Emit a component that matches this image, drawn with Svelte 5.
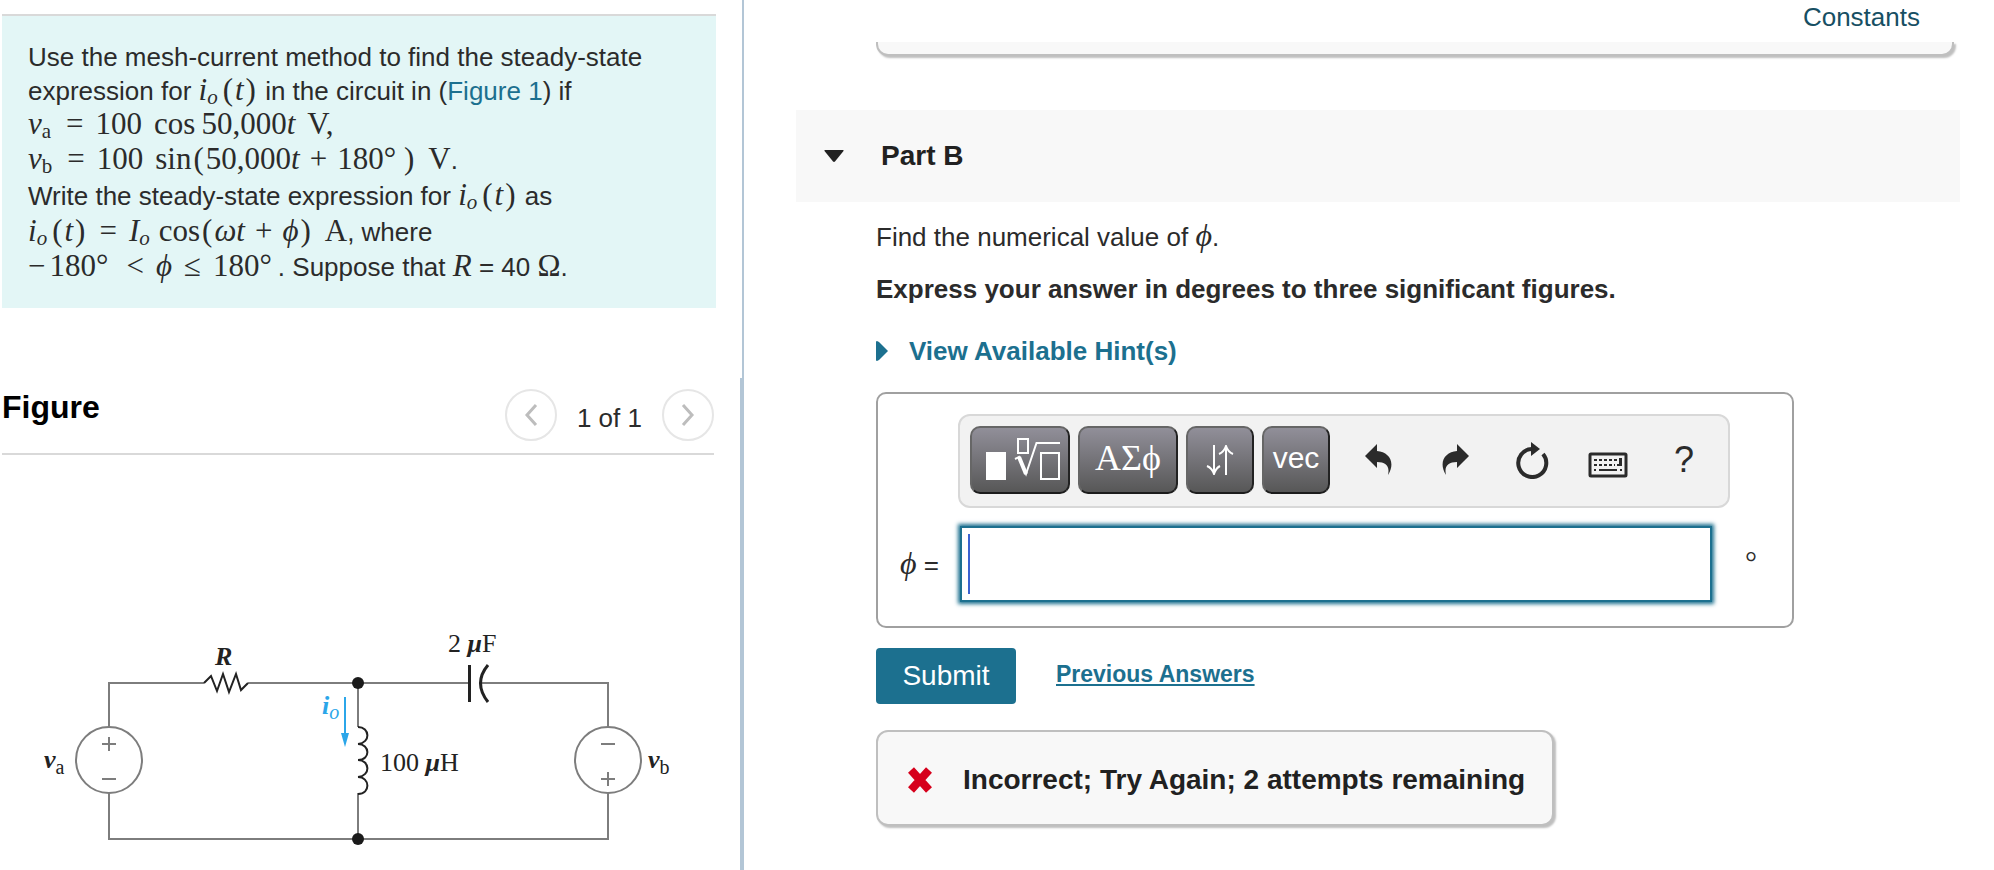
<script>
    let answer = '';
    let figure = 1;
    let total = 1;
    let open = true;
</script>

<main class="page">
    <div class="left">
        <section class="problem">
            <div class="prompt">
                <p>Use the mesh-current method to find the steady-state</p>
                <p>
                    expression for <span class="math"><i>i</i><sub><i>o</i></sub><span class="paren">(</span><i>t</i><span class="paren">)</span></span> in the circuit in (<a href="#figure">Figure 1</a>) if
                </p>
                <p>
                    <span class="math"><i>v</i><sub>a</sub><span class="rel">=</span>100<span class="op">cos</span>50,000<i>t</i><span class="unit">V</span>,</span>
                </p>
                <p class="tall">
                    <span class="math"><i>v</i><sub>b</sub><span class="rel">=</span>100<span class="fn">sin</span><span class="paren">(</span>50,000<i>t</i><span class="bin">+</span>180<span class="deg">°</span><span class="paren">)</span><span class="unit">V</span></span>.
                </p>
                <p class="tall">
                    Write the steady-state expression for <span class="math"><i>i</i><sub><i>o</i></sub><span class="paren">(</span><i>t</i><span class="paren">)</span></span> as
                </p>
                <p class="tall">
                    <span class="math"><i>i</i><sub><i>o</i></sub><span class="paren">(</span><i>t</i><span class="paren">)</span><span class="rel">=</span><i>I</i><sub><i>o</i></sub><span class="thin">cos</span><span class="paren">(</span><i>ωt</i><span class="bin">+</span><i>ϕ</i><span class="paren">)</span><span class="unit">A</span></span>, where
                </p>
                <p>
                    <span class="math"><span class="neg">−</span>180<span class="deg">°</span><span class="rel">&lt;</span><i>ϕ</i><span class="rel">≤</span>180<span class="deg">°</span></span>. Suppose that <span class="math"><i>R</i></span> = 40 <span class="math">Ω</span>.
                </p>
            </div>
        </section>

        <section class="figure" id="figure">
            <header>
                <h2>Figure</h2>
                <nav>
                    <button class="round" aria-label="Previous figure">
                        <svg width="14" height="24" viewBox="0 0 14 24"><path d="M12 2L3 12l9 10" /></svg>
                    </button>
                    <span>{figure} of {total}</span>
                    <button class="round" aria-label="Next figure">
                        <svg width="14" height="24" viewBox="0 0 14 24"><path d="M2 2l9 10-9 10" /></svg>
                    </button>
                </nav>
            </header>

            <svg class="circuit" width="680" height="230" viewBox="20 620 680 230">
                <g class="wire">
                    <path d="M109 727V683H204M248 683H469M482 683H608V727M608 793V839H109V793" />
                    <path d="M358 683V727M358 793V839" />
                    <circle cx="109" cy="760" r="33" />
                    <circle cx="608" cy="760" r="33" />
                    <path d="M102 744h14M109 737v14M102 779h14M601 744h14M601 779h14M608 772v14" />
                </g>
                <g class="part">
                    <path d="M204 683l7-7 6 15 6-17 6 18 7-18 5 16 7-7" />
                    <path class="plate" d="M469.500 665v37" />
                    <path class="plate" d="M488 665q-15 18 0 37" />
                    <path d="M358 727c12 0 13 16 0 17c12 0 13 16 0 16c12 0 13 16 0 17c12 0 13 17 0 17" />
                </g>
                <circle class="node" cx="358" cy="683" r="6" />
                <circle class="node" cx="358" cy="839" r="6" />
                <path class="current" d="M345 697v40" />
                <path class="arrow" d="M341 733h8l-4 14z" />
                <text class="bold" x="215" y="665"><tspan class="it">R</tspan></text>
                <text x="448" y="652">2 <tspan class="it bold">μ</tspan>F</text>
                <text x="380" y="771">100 <tspan class="it bold">μ</tspan>H</text>
                <text x="44" y="768"><tspan class="it bold">v</tspan><tspan class="sub" dy="6">a</tspan></text>
                <text x="648" y="768"><tspan class="it bold">v</tspan><tspan class="sub" dy="6">b</tspan></text>
                <text class="blue" x="322" y="714"><tspan class="it bold">i</tspan><tspan class="it sub" dy="5">o</tspan></text>
            </svg>
        </section>
    </div>

    <div class="right">
        <div class="top"><a href="#constants">Constants</a></div>
        <div class="earlier"></div>

        <button class="part-header" aria-expanded={open} on:click={() => (open = !open)}>
            <svg width="20" height="12" viewBox="0 0 20 12"><path d="M1 0h18q1 0 .5 1L11 11.500q-1 .8-2 0L.5 1Q0 0 1 0z" /></svg>
            Part B
        </button>

        {#if open}
            <div class="body">
                <p class="question">Find the numerical value of <span class="phi">ϕ</span>.</p>
                <p class="express">Express your answer in degrees to three significant figures.</p>
                <button class="hints">
                    <svg width="12" height="20" viewBox="0 0 12 20"><path d="M0 1q0-1 1-1l2 1 9 9-9 9-2 1q-1 0-1-1z" /></svg>
                    View Available Hint(s)
                </button>

                <div class="answer">
                    <div class="toolbar">
                        <button class="key wide" aria-label="Templates">
                            <svg width="80" height="46" viewBox="-2 1 80 46">
                                <path class="solid" d="M4 16h20v28H4z" />
                                <path class="line" d="M36 3h10v14h-10zM59 17h18v26h-18z" />
                                <path class="line" d="M33 23l4-2 7 17L54.500 7H78" />
                                <path class="line heavy" d="M37 21l7 17" />
                            </svg>
                        </button>
                        <button class="key wide greek">ΑΣϕ</button>
                        <button class="key" aria-label="Subscripts and arrows">
                            <svg width="28" height="30" viewBox="0 0 28 30">
                                <path class="line" d="M8 0v28M1 21q5 2 7 8 2-6 6-8M20 30V2M13 9q5-2 7-8 2 6 7 8" />
                            </svg>
                        </button>
                        <button class="key vec">vec</button>
                        <div class="tools">
                            <button aria-label="Undo">
                                <svg width="28" height="34" viewBox="0 0 28 34"><path d="M0 13L12 1v7c12 1 19 11 11 24 2-9-2-13-11-13v6z" /></svg>
                            </button>
                            <button aria-label="Redo">
                                <svg width="28" height="34" viewBox="0 0 28 34"><path d="M28 13L16 1v7C4 9-3 19 5 32c-2-9 2-13 11-13v6z" /></svg>
                            </button>
                            <button aria-label="Reset">
                                <svg width="34" height="38" viewBox="0 0 34 38">
                                    <path class="ring" d="M17 8A14 14 0 1 0 28 13" />
                                    <path d="M16 1l9 7-9 7z" />
                                </svg>
                            </button>
                            <button aria-label="Keyboard">
                                <svg class="keyboard" width="40" height="26" viewBox="0 0 40 26">
                                    <rect class="frame" x="2" y="2" width="36" height="22" rx="1" />
                                    <path class="dots" d="M6 8h23M6 13h21" />
                                    <path d="M31 6h3v8h-5v-2h2zM6 17h2v2H6zM11 17h18v2H11zM32 17h2v2h-2z" />
                                </svg>
                            </button>
                            <button class="help">?</button>
                        </div>
                    </div>
                    <label for="phi"><span class="phi">ϕ</span> =</label>
                    <div class="field">
                        <input id="phi" type="text" autocomplete="off" bind:value={answer} />
                        <span class="caret"></span>
                    </div>
                    <span class="degree">°</span>
                </div>

                <div class="actions">
                    <button class="submit">Submit</button>
                    <a href="#previous">Previous Answers</a>
                </div>

                <div class="feedback">
                    <svg width="28" height="28" viewBox="0 0 28 28"><path d="M5 4l18 20M23 4L5 24" /></svg>
                    Incorrect; Try Again; 2 attempts remaining
                </div>
            </div>
        {/if}
    </div>
</main>

<style>
    :global(body) {
        background: #fff;
    }

    .page {
        display: grid;
        grid-template-columns: 372fr 625fr;
        min-height: 100vh;
        color: #2b2b2b;
        font-family: 'Liberation Sans', Arial, sans-serif;
        font-size: 26px;
    }

    p,
    h2 {
        margin: 0;
    }

    a {
        color: #1c708f;
        text-decoration: none;
    }

    button {
        margin: 0;
        padding: 0;
        border: 0;
        background: none;
        color: inherit;
        font: inherit;
        cursor: pointer;
    }

    svg {
        display: block;
        flex: none;
    }

    .left {
        display: flex;
        flex-direction: column;
    }

    .problem {
        padding: 14px 26px 70px 2px;
        border-right: 2px solid #b3c6d6;
    }

    .prompt {
        padding: 24px 26px;
        border-top: 2px solid #d9d9d9;
        background: #e3f6f6;
        white-space: nowrap;
    }

    .prompt p {
        height: 34px;
        line-height: 34px;
    }

    .prompt p.tall {
        height: 36px;
        line-height: 36px;
    }

    .math {
        font-family: 'Liberation Serif', 'DejaVu Serif', serif;
        font-size: 31px;
        line-height: 0;
    }

    .math sub {
        margin-right: 3px;
        font-size: 21px;
        line-height: 0;
        vertical-align: -4px;
    }

    .paren {
        margin: 0 2px;
    }

    .rel {
        margin: 0 12px;
    }

    .bin {
        margin: 0 10px;
    }

    .neg {
        margin-right: 4px;
    }

    .deg {
        margin-right: 6px;
    }

    .op {
        margin: 0 6px 0 12px;
    }

    .fn {
        margin-left: 12px;
    }

    .thin {
        margin-left: 6px;
    }

    .unit {
        margin-left: 12px;
    }

    .figure {
        flex: 1;
        padding: 10px 26px 0 2px;
        border-right: 4px solid #b3c6d6;
    }

    .figure header {
        display: flex;
        justify-content: space-between;
        height: 65px;
        border-bottom: 2px solid #d9d9d9;
    }

    h2 {
        padding-top: 1px;
        color: #000;
        font-size: 32px;
        line-height: 36px;
    }

    nav {
        display: flex;
        align-items: center;
        gap: 20px;
        height: 52px;
        padding-top: 1px;
    }

    nav span {
        padding-top: 6px;
    }

    .round {
        display: flex;
        align-items: center;
        justify-content: center;
        box-sizing: border-box;
        width: 52px;
        height: 52px;
        border: 2px solid #e6e6e6;
        border-radius: 50%;
    }

    .round path {
        fill: none;
        stroke: #bdbdbd;
        stroke-width: 3;
    }

    .circuit {
        max-width: 100%;
        margin: 165px 0 0 18px;
        font-family: 'Liberation Serif', serif;
        font-size: 26px;
        fill: #222;
    }

    .wire {
        fill: none;
        stroke: #7d7d7d;
        stroke-width: 2;
    }

    .part {
        fill: none;
        stroke: #222;
        stroke-width: 2;
    }

    .plate {
        stroke-width: 3;
    }

    .node {
        fill: #1a1a1a;
    }

    .current {
        stroke: #2ba6e9;
        stroke-width: 2;
    }

    .arrow,
    .blue {
        fill: #2ba6e9;
    }

    .it {
        font-style: italic;
    }

    .bold {
        font-weight: bold;
    }

    .sub {
        font-size: 20px;
    }

    .right {
        padding: 0 34px 0 52px;
    }

    .top {
        height: 42px;
        padding-right: 40px;
        line-height: 34px;
        text-align: right;
    }

    .top a {
        color: #174f63;
    }

    .earlier {
        height: 12px;
        margin: 0 6px 54px 80px;
        border: 2px solid #bfbfbf;
        border-top: 0;
        border-radius: 0 0 12px 12px;
        background: #f8f8f8;
        box-shadow: 2px 2px 2px #bfbfbf;
    }

    .part-header {
        display: flex;
        align-items: center;
        gap: 37px;
        width: 100%;
        height: 92px;
        padding-left: 28px;
        background: #f8f8f8;
        color: #212121;
        font-size: 28px;
        font-weight: bold;
    }

    .part-header path {
        fill: #212121;
    }

    .body {
        padding-left: 80px;
    }

    .question {
        padding-top: 20px;
        line-height: 30px;
    }

    .phi {
        font-family: 'Liberation Serif', 'DejaVu Serif', serif;
        font-size: 32px;
        font-style: italic;
        line-height: 0;
    }

    .express {
        padding-top: 22px;
        font-weight: bold;
        line-height: 30px;
    }

    .hints {
        display: flex;
        align-items: center;
        gap: 21px;
        height: 30px;
        margin: 32px 0 26px;
        color: #1c708f;
        font-weight: bold;
    }

    .hints path {
        fill: #1c708f;
    }

    .answer {
        display: grid;
        grid-template-columns: 80px 1fr 62px;
        row-gap: 18px;
        align-items: center;
        box-sizing: border-box;
        max-width: 918px;
        padding: 20px 0 24px;
        border: 2px solid #a0a0a0;
        border-radius: 10px;
    }

    .toolbar {
        display: flex;
        grid-column: 2;
        gap: 8px;
        box-sizing: border-box;
        height: 94px;
        padding: 10px;
        border: 2px solid #d8d8d8;
        border-radius: 12px;
        background: #f2f2f2;
    }

    .key {
        display: flex;
        align-items: center;
        justify-content: center;
        box-sizing: border-box;
        width: 68px;
        height: 68px;
        border: 2px solid;
        border-color: #666 #222 #1c1c1c #666;
        border-radius: 10px;
        background: linear-gradient(#918f99, #575757);
        color: #fff;
        font-size: 30px;
    }

    .wide {
        width: 100px;
    }

    .greek {
        padding-bottom: 4px;
        font-family: 'Liberation Serif', 'DejaVu Serif', serif;
        font-size: 36px;
    }

    .solid {
        fill: #fff;
    }

    .line {
        fill: none;
        stroke: #fff;
        stroke-width: 2;
    }

    .heavy {
        stroke-width: 4;
    }

    .vec {
        padding-bottom: 4px;
    }

    .tools {
        display: flex;
        flex: 1;
        justify-content: space-between;
        height: 68px;
        padding-left: 7px;
    }

    .tools button {
        display: flex;
        align-items: center;
        justify-content: center;
        width: 68px;
    }

    .tools path {
        fill: #2b2b2b;
    }

    .tools .ring,
    .tools .frame {
        fill: none;
        stroke: #2b2b2b;
        stroke-width: 4;
    }

    .tools .frame {
        stroke-width: 3;
    }

    .tools .dots {
        fill: none;
        stroke: #2b2b2b;
        stroke-width: 2;
        stroke-dasharray: 3 2;
    }

    .keyboard {
        margin-top: 10px;
    }

    .tools .help {
        font-size: 36px;
    }

    .answer label {
        grid-column: 1;
        padding: 2px 0 0 22px;
    }

    .field {
        position: relative;
        margin: 0 18px 0 2px;
    }

    .field input {
        display: block;
        box-sizing: border-box;
        width: 100%;
        height: 76px;
        padding: 0 8px;
        border: 2px solid #1c708f;
        background: #fff;
        box-shadow: 0 0 4px 2px #1c708f;
        color: #2b2b2b;
        font: inherit;
        outline: 0;
    }

    .caret {
        position: absolute;
        top: 8px;
        bottom: 8px;
        left: 8px;
        width: 2px;
        background: #3b62d0;
    }

    .degree {
        padding: 0 0 4px 15px;
        font-family: 'Liberation Serif', serif;
        font-size: 30px;
    }

    .actions {
        display: flex;
        align-items: center;
        gap: 40px;
        margin: 20px 0 26px;
    }

    .submit {
        width: 140px;
        height: 56px;
        border-radius: 4px;
        background: #1c708f;
        color: #fff;
        font-size: 28px;
    }

    .actions a {
        padding-bottom: 4px;
        font-size: 23px;
        font-weight: bold;
        text-decoration: underline;
    }

    .feedback {
        display: flex;
        align-items: center;
        gap: 29px;
        box-sizing: border-box;
        width: max-content;
        height: 96px;
        padding: 4px 27px 0 28px;
        border: 2px solid #bfbfbf;
        border-radius: 12px;
        background: #f8f8f8;
        box-shadow: 2px 2px 2px #bfbfbf;
        color: #212121;
        font-size: 28px;
        font-weight: bold;
    }

    .feedback path {
        stroke: #d6001c;
        stroke-width: 8;
    }
</style>
